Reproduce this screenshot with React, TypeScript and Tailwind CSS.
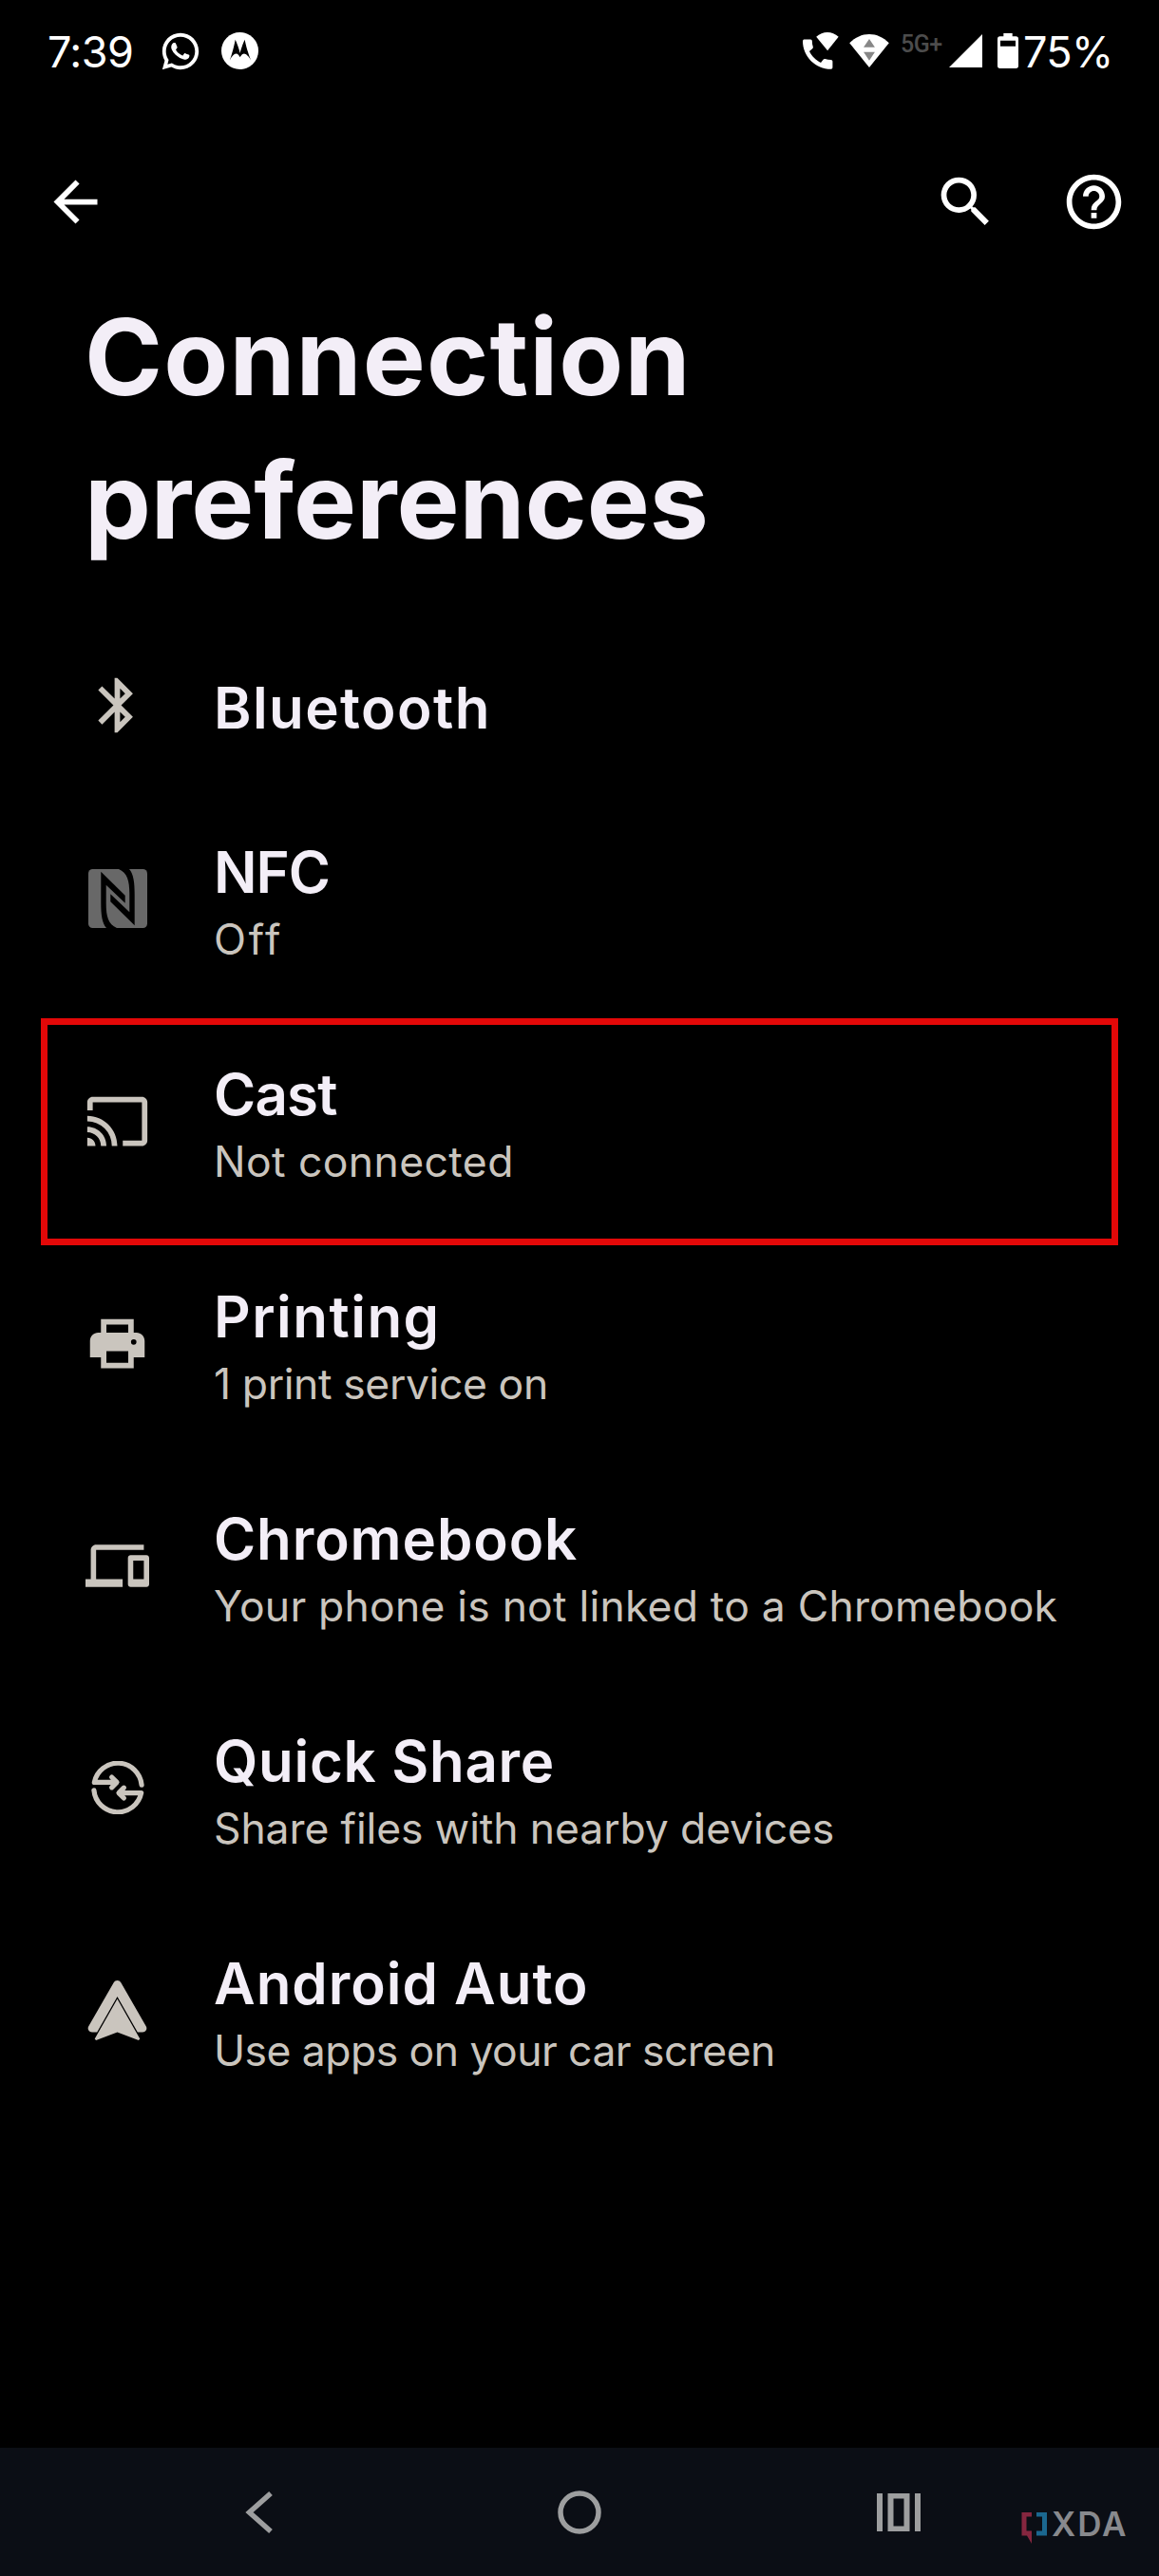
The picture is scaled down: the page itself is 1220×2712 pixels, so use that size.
import type { ReactNode } from "react";
import { SiAndroidauto } from "react-icons/si";
import { RiWhatsappLine } from "react-icons/ri";
import {
  MdArrowBack,
  MdBluetooth,
  MdCast,
  MdDevices,
  MdHelpOutline,
  MdSearch,
} from "react-icons/md";

function MotorolaIcon() {
  return (
    <svg className="ml-[20px] h-[39px] w-[39px]" viewBox="0 0 114 114">
      <circle cx="57" cy="57" r="57" fill="#fff" />
      <path
        d="M26 86C32 70 40 40 43 23C48 34 55 52 57.5 64C60 52 67 34 72 23C75 40 84 70 91 86C84 74 76 66 70 66C64 66 60 72 57.5 77C55 72 51 66 45 66C39 66 32 74 26 86Z"
        fill="#000"
      />
    </svg>
  );
}

function WifiCallingIcon() {
  return (
    <svg className="h-[39px] w-[38px]" viewBox="0 0 115 117" fill="#fff">
      <path d="M43 14C63 -5 94 -5 114 14L79 58Z" />
      <path
        transform="translate(0 22) scale(5.28) translate(-3 -3)"
        d="M20.01 15.38c-1.23 0-2.42-.2-3.53-.56-.35-.12-.74-.03-1.01.24l-1.57 1.97c-2.83-1.35-5.48-3.9-6.89-6.83l1.95-1.66c.27-.28.35-.67.24-1.02-.37-1.11-.56-2.3-.56-3.53 0-.54-.45-.99-.99-.99H4.19C3.65 3 3 3.24 3 3.99 3 13.28 10.73 21 20.01 21c.71 0 .99-.63.99-1.18v-3.45c0-.54-.45-.99-.99-.99z"
      />
    </svg>
  );
}

function WifiIcon() {
  return (
    <svg className="ml-[11px] h-[35px] w-[42px]" viewBox="0 0 126 106">
      <path d="M0 28C18 10 40 0 63 0C86 0 108 10 126 28L63 106Z" fill="#fff" />
      <path d="M45 42H81L63 15Z M45 57H81L63 84Z" fill="#878787" />
    </svg>
  );
}

function SignalIcon() {
  return (
    <svg className="h-[35px] w-[35px]" viewBox="0 0 35 35">
      <path d="M0 35L35 0V35Z" fill="#fff" />
    </svg>
  );
}

function BatteryIcon() {
  return (
    <svg className="ml-4 h-[37px] w-[22px]" viewBox="0 0 66 111">
      <path
        d="M19 0H47V10H58Q66 10 66 18V103Q66 111 58 111H8Q0 111 0 103V18Q0 10 8 10H19Z M9 23V41H57V23Z"
        fill="#fff"
        fillRule="evenodd"
      />
    </svg>
  );
}

function NfcIcon() {
  const band =
    "M13.3 2.7L38.7 27.7V35.7L18.7 16.7V36C18.7 50 21 58 30 62H19C14.5 57 13.3 48 13.3 36Z";
  return (
    <svg className="size-[62px]" viewBox="0 0 62 62">
      <rect width="62" height="62" rx="4.5" fill="#686868" />
      <path d={band} fill="#000" />
      <path d={band} fill="#000" transform="rotate(180 31 31)" />
    </svg>
  );
}

function PrinterIcon() {
  return (
    <svg className="size-[69px]" viewBox="0 0 24 24" fill="currentColor">
      <path
        fillRule="evenodd"
        d="M6 3H18V8H19C20.66 8 22 9.34 22 11V17H18V21H6V17H2V11C2 9.34 3.34 8 5 8H6ZM8 5V8H16V5ZM8 14.8V19H16V14.8ZM18 10.4A1 1 0 1 0 18 12.4A1 1 0 1 0 18 10.4Z"
      />
    </svg>
  );
}

function QuickShareIcon() {
  const half = (
    <>
      <path d="M26 22.4H3.3A25.2 25.2 0 0 1 53.1 25.2" />
      <path d="M21.6 17L27 22.4L21.6 27.8" />
    </>
  );
  return (
    <svg
      className="size-14"
      viewBox="0 0 56 56"
      fill="none"
      stroke="currentColor"
      strokeWidth="5.2"
      strokeLinecap="round"
      strokeLinejoin="round"
    >
      {half}
      <g transform="rotate(180 28 28)">{half}</g>
    </svg>
  );
}

type Item = {
  title: string;
  spacing: string;
  sub?: string;
  subSpacing?: string;
  icon: ReactNode;
  highlighted?: boolean;
};

const items: Item[] = [
  { title: "Bluetooth", spacing: "tracking-[1.4px]", icon: <MdBluetooth size={69} /> },
  { title: "NFC", spacing: "tracking-[-1px]", sub: "Off", subSpacing: "tracking-[2.6px]", icon: <NfcIcon /> },
  {
    title: "Cast",
    spacing: "tracking-[-0.8px]",
    sub: "Not connected",
    subSpacing: "tracking-[0.4px]",
    icon: <MdCast size={69} />,
    highlighted: true,
  },
  {
    title: "Printing",
    spacing: "tracking-[1.5px]",
    sub: "1 print service on",
    subSpacing: "tracking-[-0.4px]",
    icon: <PrinterIcon />,
  },
  {
    title: "Chromebook",
    spacing: "tracking-[0.9px]",
    sub: "Your phone is not linked to a Chromebook",
    subSpacing: "tracking-[0.2px]",
    icon: <MdDevices size={67} />,
  },
  {
    title: "Quick Share",
    spacing: "tracking-[0.7px]",
    sub: "Share files with nearby devices",
    subSpacing: "tracking-[-0.12px]",
    icon: <QuickShareIcon />,
  },
  {
    title: "Android Auto",
    spacing: "tracking-[1px]",
    sub: "Use apps on your car screen",
    subSpacing: "tracking-[-0.55px]",
    icon: <SiAndroidauto size={63} />,
  },
];

function Row({ item }: { item: Item }) {
  return (
    <li className={`relative flex items-center ${item.sub ? "h-[234px]" : "h-[173px]"}`}>
      <div className="ml-[88px] flex w-[71px] shrink-0 items-center justify-center text-[#cac5be]">
        {item.icon}
      </div>
      <div className="ml-[66px] pt-[5px] whitespace-nowrap">
        <div className={`text-[60px] leading-[72px] font-semibold text-[#f3eef7] ${item.spacing}`}>
          {item.title}
        </div>
        {item.sub && (
          <div className={`mt-2 text-[44.5px] leading-[54px] text-[#cac5be] ${item.subSpacing}`}>
            {item.sub}
          </div>
        )}
      </div>
      {item.highlighted && (
        <div className="absolute top-[9px] left-[43px] h-[239px] w-[1134px] border-[7px] border-[#e30808]" />
      )}
    </li>
  );
}

function StatusBar() {
  return (
    <div className="flex h-[107px] items-center justify-between text-[45px] leading-[45px]">
      <div className="flex items-center pl-[50px]">
        <span className="w-[117px] pt-[2px] tracking-[-0.6px]">7:39</span>
        <RiWhatsappLine size={46} />
        <MotorolaIcon />
      </div>
      <div className="flex w-[375px] items-center">
        <WifiCallingIcon />
        <WifiIcon />
        <span className="mb-[15px] ml-[12px] w-[51px] font-['Roboto'] text-[25px] leading-[25px] font-medium tracking-[-0.5px] text-[#4c4c4c]">
          5G+
        </span>
        <SignalIcon />
        <BatteryIcon />
        <span className="ml-[5px] pt-[2px] tracking-[-0.7px]">75%</span>
      </div>
    </div>
  );
}

function XdaMark() {
  return (
    <div className="absolute top-[68px] left-[1075px] flex h-[34px] items-start text-[#88898d]">
      <svg className="h-[34px] w-[28px]" viewBox="0 0 28 34">
        <path d="M0.5 0H11V4.5H5.5V19.5H11V33L6 24.5H0.5Z" fill="#85263f" />
        <path d="M16 0H27V24.5H16V19.5H22V4.5H16Z" fill="#1b678f" />
      </svg>
      <span className="ml-[4px] text-[35px] leading-[25px] font-semibold tracking-[2px]">XDA</span>
    </div>
  );
}

function NavBar() {
  return (
    <nav className="relative mt-auto flex h-[135px] items-center bg-[#0b0e15] text-[#9d9e9f]">
      <svg className="ml-[258px] h-[46px] w-[30px]" viewBox="0 0 30 46" fill="none" stroke="currentColor" strokeWidth="5.5">
        <path d="M27 3L4.5 23L27 43" />
      </svg>
      <svg className="ml-[299px] size-[46px]" viewBox="0 0 46 46" fill="none" stroke="currentColor" strokeWidth="5.5">
        <circle cx="23" cy="23" r="20" />
      </svg>
      <svg className="ml-[290px] h-[40px] w-[46px]" viewBox="0 0 46 40" fill="currentColor">
        <path fillRule="evenodd" d="M0 0H6V40H0Z M40 0H46V40H40Z M11.5 0H34.5V40H11.5Z M17.5 5.5V34.5H28.5V5.5Z" />
      </svg>
      <XdaMark />
    </nav>
  );
}

export default function App() {
  return (
    <div className="flex h-[2712px] w-[1220px] flex-col overflow-hidden bg-black font-['Inter',sans-serif] text-white">
      <StatusBar />
      <header className="mt-[17px] flex h-[176px] items-center pr-[34px] pl-[45px]">
        <MdArrowBack size={69} />
        <MdSearch size={69} className="ml-auto" />
        <MdHelpOutline size={69} className="ml-[66px]" />
      </header>
      <h1 className="pl-[89px] text-[111px] leading-[151px] font-bold text-[#f3eef7]">
        <span className="block tracking-[1.1px]">Connection</span>
        <span className="block tracking-[-0.1px]">preferences</span>
      </h1>
      <ul className="mt-[54px]">
        {items.map((item) => (
          <Row key={item.title} item={item} />
        ))}
      </ul>
      <NavBar />
    </div>
  );
}
